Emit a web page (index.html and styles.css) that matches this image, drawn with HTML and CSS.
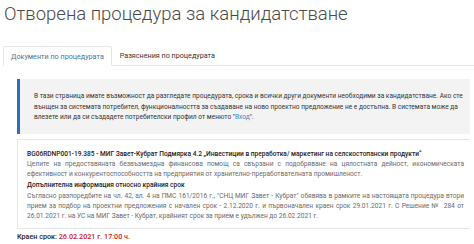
FILE: index.html
```html
<!DOCTYPE html>
<html lang="bg">
<head>
<meta charset="utf-8">
<link rel="stylesheet" href="styles.css">
</head>
<body>
<h1 class="title">Отворена процедура за кандидатстване</h1>
<div class="tabs">
  <div class="tab active">Документи по процедурата</div>
  <div class="tab">Разяснения по процедурата</div>
  <div class="tab-fill"></div>
</div>
<div class="content">
  <div class="info">
    В тази страница имате възможност да разгледате процедурата, срока и всички други документи необходими за кандидатстване. Ако сте<br>
    вънщен за системата потребител, функционалността за създаване на ново проектно предложение не е достъпна. В системата може да<br>
    влезете или да си създадете потребителски профил от менюто "<a class="link">Вход</a>".
  </div>
  <div class="card">
    <div class="card-title">BG06RDNP001-19.385 - МИГ Завет-Кубрат Подмярка 4.2 „Инвестиции в преработка/ маркетинг на селскостопански продукти“</div>
    <p class="card-text">Целите на предоставяната безвъзмездна финансова помощ са свързани с подобряване на цялостната дейност, икономическата ефективност и конкурентоспособността на предприятия от хранително-преработвателната промишленост.</p>
    <div class="card-sub">Допълнителна информация относно крайния срок</div>
    <p class="card-text">Съгласно разпоредбите на чл. 42, ал. 4 на ПМС 161/2016 г., "СНЦ МИГ Завет - Кубрат" обявява в рамките на настоящата процедура втори прием за подбор на проектни предложения с начален срок - 2.12.2020 г. и първоначален краен срок 29.01.2021 г. С Решение №&nbsp; 284 от 26.01.2021 г. на УС на МИГ Завет - Кубрат, крайният срок за прием е удължен до 26.02.2021 г.</p>
  </div>
  <div class="deadline"><span class="deadline-label">Краен срок:</span> <span class="date">26.02.2021 г. 17:00 ч.</span></div>
</div>
</body>
</html>
```
FILE: styles.css
```css
html, body {
  margin: 0;
  padding: 0;
  background: #fff;
  font-family: Roboto, "Noto Sans", sans-serif;
  color: #333;
}
body {
  padding: 3px 0 0 3px;
}
.title {
  margin: 0 0 0 1px;
  font-size: 18.5px;
  font-weight: 300;
  color: #4a4a4a;
  line-height: 22px;
}
.tabs {
  display: flex;
  margin-top: 21px;
  height: 20px;
}
.tab {
  font-size: 7.2px;
  line-height: 20px;
  padding: 0 8px;
  border-bottom: 1px solid #e6e6e6;
  color: #333;
}
.tab.active {
  color: #4f7396;
  border: 1px solid #e6e6e6;
  border-bottom-color: #fff;
  border-radius: 2px 2px 0 0;
  padding: 0 7px;
  line-height: 19px;
}
.tab-fill {
  flex: 1;
  border-bottom: 1px solid #e6e6e6;
}
.content {
  padding: 13px 4px 0 14px;
}
.info {
  background: #f3f3f3;
  border-left: 3px solid #2a6fb8;
  padding: 12px 2px 11.5px 14px;
  font-size: 6.6px;
  line-height: 10.5px;
  color: #333;
  white-space: nowrap;
}
.link {
  color: #3f86c8;
}
.card {
  margin-top: 5px;
  border: 1px solid #e6e6e6;
  border-right: none;
  padding: 9px 6px 7px 9px;
}
.card-title {
  font-size: 6.6px;
  font-weight: 500;
  color: #222;
  line-height: 10px;
}
.card-text {
  margin: 0;
  font-size: 6.6px;
  line-height: 10px;
  color: #6a6a6a;
  text-align: justify;
}
.card-sub {
  font-size: 6.6px;
  font-weight: 500;
  color: #222;
  line-height: 12px;
}
.deadline {
  margin-top: 3px;
  font-size: 7.2px;
  line-height: 10px;
  color: #333;
}
.deadline-label {
  font-weight: 500;
  color: #222;
}
.date {
  color: #d0201b;
  font-weight: 500;
}
```
